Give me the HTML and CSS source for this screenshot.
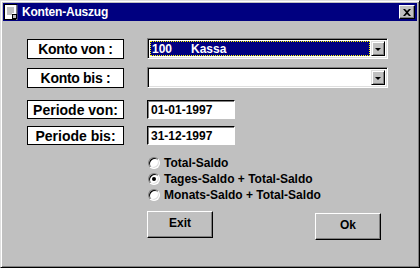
FILE: index.html
```html
<!DOCTYPE html>
<html lang="de">
<head>
    <meta charset="UTF-8">
    <title>Konten-Auszug</title>
    <link rel="stylesheet" href="styles.css">
</head>
<body>
    <div class="window">
        <div class="titlebar">
            <svg class="app-icon" width="14" height="16" viewBox="0 0 14 16">
                <rect x="0.5" y="0.5" width="12" height="15" fill="#fff" stroke="#000"/>
                <rect x="12" y="1" width="1.5" height="15" fill="#808080"/>
                <path d="M3 4h7M3 6h7M3 8h7M3 10h5" stroke="#808080"/>
                <rect x="8.5" y="10.5" width="4" height="4" fill="#c0c0c0" stroke="#000"/>
            </svg>
            <span class="title">Konten-Auszug</span>
            <span class="close">
                <svg width="8" height="7" viewBox="0 0 8 7">
                    <path d="M0 0h2l2 2 2-2h2L5 3.5 8 7H6L4 5 2 7H0l3-3.5z" fill="#000"/>
                </svg>
            </span>
        </div>

        <div class="content">
            <div class="row first">
                <div class="label big">Konto von :</div>
                <div class="combo">
                    <div class="combo-value selected"><span class="num">100</span><span>Kassa</span></div>
                    <div class="combo-btn"><span class="arrow"></span></div>
                </div>
            </div>
            <div class="row second">
                <div class="label big">Konto bis :</div>
                <div class="combo">
                    <div class="combo-value"></div>
                    <div class="combo-btn"><span class="arrow"></span></div>
                </div>
            </div>
            <div class="row third">
                <div class="label small">Periode von:</div>
                <div class="field">01-01-1997</div>
            </div>
            <div class="row fourth">
                <div class="label small">Periode bis:</div>
                <div class="field">31-12-1997</div>
            </div>

            <div class="options">
                <label class="radio"><span class="dot"></span>Total-Saldo</label>
                <label class="radio checked"><span class="dot"></span>Tages-Saldo + Total-Saldo</label>
                <label class="radio"><span class="dot"></span>Monats-Saldo + Total-Saldo</label>
            </div>

            <div class="buttons">
                <button class="btn">Exit</button>
                <button class="btn ok">Ok</button>
            </div>
        </div>
    </div>
</body>
</html>
```

FILE: styles.css
```css
body {
    margin: 0;
    background-color: #c0c0c0;
    font-family: "Liberation Sans", Arial, sans-serif;
}

.window {
    width: 420px;
    height: 268px;
    box-sizing: border-box;
    padding: 2px;
    background-color: #c0c0c0;
    border: 1px solid;
    border-color: #dfdfdf #000 #000 #dfdfdf;
    box-shadow: inset 1px 1px #fff, inset -1px -1px #808080;
}

/* Titelleiste */
.titlebar {
    height: 18px;
    background-color: #000080;
    display: flex;
    align-items: center;
    padding: 0 2px 0 1px;
}

.app-icon {
    margin-right: 4px;
}

.title {
    color: #fff;
    font-weight: bold;
    font-size: 12px;
    letter-spacing: -0.2px;
}

.close {
    margin-left: auto;
    width: 16px;
    height: 14px;
    box-sizing: border-box;
    background-color: #c0c0c0;
    border: 1px solid;
    border-color: #fff #000 #000 #fff;
    box-shadow: inset -1px -1px #808080;
    display: flex;
    align-items: center;
    justify-content: center;
}

.content {
    padding: 17px 0 0 24px;
}

.row {
    display: flex;
    gap: 23px;
}

.row.second {
    margin-top: 8px;
}

.row.third {
    margin-top: 12px;
}

.row.fourth {
    margin-top: 7px;
}

.label {
    width: 97px;
    box-sizing: border-box;
    background-color: #fff;
    border: 1px solid #000;
    display: flex;
    align-items: center;
    justify-content: center;
    font-weight: bold;
    font-size: 14px;
    color: #000;
}

.label.big {
    margin-top: 1px;
    height: 20px;
    letter-spacing: -0.3px;
}

.label.small {
    height: 19px;
}

/* Kombinationsfeld */
.combo {
    width: 241px;
    height: 21px;
    box-sizing: border-box;
    background-color: #fff;
    border: 1px solid;
    border-color: #808080 #fff #fff #808080;
    box-shadow: inset 1px 1px #000, inset -1px -1px #dfdfdf;
    padding: 2px;
    display: flex;
}

.combo-value {
    flex: 1;
    height: 100%;
    box-sizing: border-box;
    display: flex;
    align-items: center;
    color: #fff;
    font-weight: bold;
    font-size: 12px;
    margin-right: 1px;
}

.combo-value.selected {
    background-color: #000080;
    outline: 1px dotted #ffff00;
    outline-offset: -1px;
    padding-left: 2px;
}

.combo-value .num {
    width: 39px;
}

.combo-btn {
    width: 14px;
    height: 100%;
    box-sizing: border-box;
    background-color: #c0c0c0;
    border: 1px solid;
    border-color: #dfdfdf #000 #000 #dfdfdf;
    box-shadow: inset 1px 1px #fff, inset -1px -1px #808080;
    display: flex;
    align-items: center;
    justify-content: center;
}

.arrow {
    width: 0;
    height: 0;
    border-left: 3px solid transparent;
    border-right: 3px solid transparent;
    border-top: 3px solid #000;
    margin-top: 1px;
}

/* Datumsfelder */
.field {
    width: 88px;
    height: 19px;
    box-sizing: border-box;
    background-color: #fff;
    border: 1px solid;
    border-color: #000 #fff #fff #000;
    box-shadow: inset 1px 1px #808080;
    padding-left: 3px;
    display: flex;
    align-items: center;
    font-size: 12px;
    font-weight: bold;
}

/* Optionen */
.options {
    margin: 10px 0 0 121px;
    display: flex;
    flex-direction: column;
}

.radio {
    height: 16px;
    display: flex;
    align-items: center;
    font-size: 12px;
    font-weight: bold;
}

.dot {
    width: 12px;
    height: 12px;
    box-sizing: border-box;
    border-radius: 50%;
    background-color: #fff;
    border: 1px solid;
    border-color: #808080 #fff #fff #808080;
    box-shadow: inset 1px 1px #000, inset -1px -1px #dfdfdf;
    margin-right: 4px;
    display: flex;
    align-items: center;
    justify-content: center;
}

.radio.checked .dot::after {
    content: "";
    width: 4px;
    height: 4px;
    border-radius: 50%;
    background-color: #000;
}

/* Knöpfe */
.buttons {
    margin: 8px 0 0 120px;
    display: flex;
    gap: 102px;
    align-items: flex-start;
}

.btn {
    width: 66px;
    height: 27px;
    box-sizing: border-box;
    background-color: #c0c0c0;
    border: 1px solid;
    border-color: #fff #000 #000 #fff;
    box-shadow: inset -1px -1px #808080;
    font-family: "Liberation Sans", Arial, sans-serif;
    font-size: 12px;
    font-weight: bold;
    color: #000;
    padding: 0 0 4px 0;
    cursor: pointer;
}

.btn.ok {
    margin-top: 2px;
}
```
